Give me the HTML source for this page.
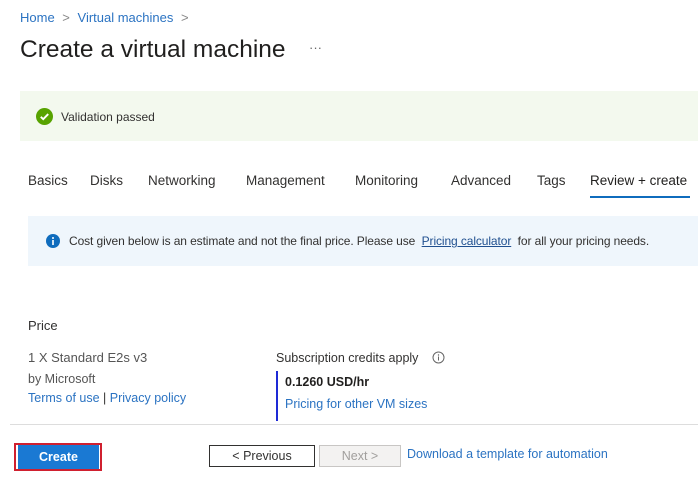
<!DOCTYPE html>
<html><head><meta charset="utf-8"><style>
body{margin:0;width:698px;height:484px;background:#fff;font-family:"Liberation Sans",Arial,sans-serif;color:#323130;position:relative;overflow:hidden}
.a{position:absolute;white-space:nowrap}
.tab{position:absolute;top:173px;font-size:13.5px;color:#323130}
.btn{position:absolute;top:445px;height:22px;box-sizing:border-box;font-size:12.5px;text-align:center;line-height:20px}
</style></head><body>
<div class="a" style="left:20px;top:10px;font-size:13px;color:#2b73c2">Home <span style="color:#888;margin:0 4px">&gt;</span> Virtual machines <span style="color:#888;margin-left:4px">&gt;</span></div>
<div class="a" style="left:20px;top:36px;font-size:24.5px;color:#201f1e">Create a virtual machine</div>
<div class="a" style="left:309px;top:40px;font-size:13px;color:#666">···</div>
<div class="a" style="left:20px;top:91px;width:678px;height:50px;background:#f3f9ee"></div>
<svg class="a" style="left:36px;top:108px" width="17" height="17" viewBox="0 0 16 16"><circle cx="8" cy="8" r="8" fill="#57a300"/><path d="M4.5 8.3l2.3 2.2 4.7-4.8" stroke="#fff" stroke-width="1.8" fill="none"/></svg>
<div class="a" style="left:61px;top:110px;font-size:12px">Validation passed</div>
<div class="tab" style="left:28px">Basics</div>
<div class="tab" style="left:90px">Disks</div>
<div class="tab" style="left:148px">Networking</div>
<div class="tab" style="left:246px">Management</div>
<div class="tab" style="left:355px">Monitoring</div>
<div class="tab" style="left:451px">Advanced</div>
<div class="tab" style="left:537px">Tags</div>
<div class="tab" style="left:590px;font-size:13.5px;color:#201f1e">Review + create</div>
<div class="a" style="left:590px;top:196px;width:100px;height:2px;background:#0f6cbd"></div>
<div class="a" style="left:28px;top:216px;width:670px;height:50px;background:#eff6fc"></div>
<svg class="a" style="left:46px;top:234px" width="14" height="14" viewBox="0 0 14 14"><circle cx="7" cy="7" r="7" fill="#0f6cbd"/><rect x="6.2" y="6" width="1.6" height="5" fill="#fff"/><circle cx="7" cy="4" r="1" fill="#fff"/></svg>
<div class="a" style="left:69px;top:234px;font-size:12px;letter-spacing:-0.1px">Cost given below is an estimate and not the final price. Please use &nbsp;<span style="color:#1f4f8f;text-decoration:underline">Pricing calculator</span>&nbsp; for all your pricing needs.</div>
<div class="a" style="left:28px;top:318px;font-size:13px">Price</div>
<div class="a" style="left:28px;top:350px;font-size:13px;color:#555">1 X Standard E2s v3</div>
<div class="a" style="left:28px;top:372px;font-size:12.5px;color:#555">by Microsoft</div>
<div class="a" style="left:28px;top:391px;font-size:12.5px;color:#2b73c2">Terms of use <span style="color:#323130">|</span> Privacy policy</div>
<div class="a" style="left:276px;top:351px;font-size:12.5px">Subscription credits apply</div>
<svg class="a" style="left:432px;top:351px" width="13" height="13" viewBox="0 0 13 13"><circle cx="6.5" cy="6.5" r="5.5" stroke="#666" fill="none"/><rect x="6" y="5.5" width="1" height="4" fill="#666"/><circle cx="6.5" cy="4" r=".7" fill="#666"/></svg>
<div class="a" style="left:276px;top:371px;width:2px;height:50px;background:#1e2ad6"></div>
<div class="a" style="left:285px;top:375px;font-size:12.5px;font-weight:bold;color:#201f1e">0.1260 USD/hr</div>
<div class="a" style="left:285px;top:397px;font-size:12.5px;color:#2b73c2">Pricing for other VM sizes</div>
<div class="a" style="left:10px;top:424px;width:688px;height:1px;background:#ddd"></div>
<div class="a" style="left:14px;top:443px;width:88px;height:28px;box-sizing:border-box;border:2px solid #d0202f"></div>
<div class="btn" style="left:18px;width:81px;height:24px;top:445px;background:#1a79d3;color:#fff;font-weight:bold;line-height:24px">Create</div>
<div class="btn" style="left:209px;width:106px;border:1px solid #323130;color:#323130">&lt; Previous</div>
<div class="btn" style="left:319px;width:82px;border:1px solid #c8c6c4;background:#f3f2f1;color:#a19f9d">Next &gt;</div>
<div class="a" style="left:407px;top:447px;font-size:12.5px;color:#2b73c2">Download a template for automation</div>
</body></html>
